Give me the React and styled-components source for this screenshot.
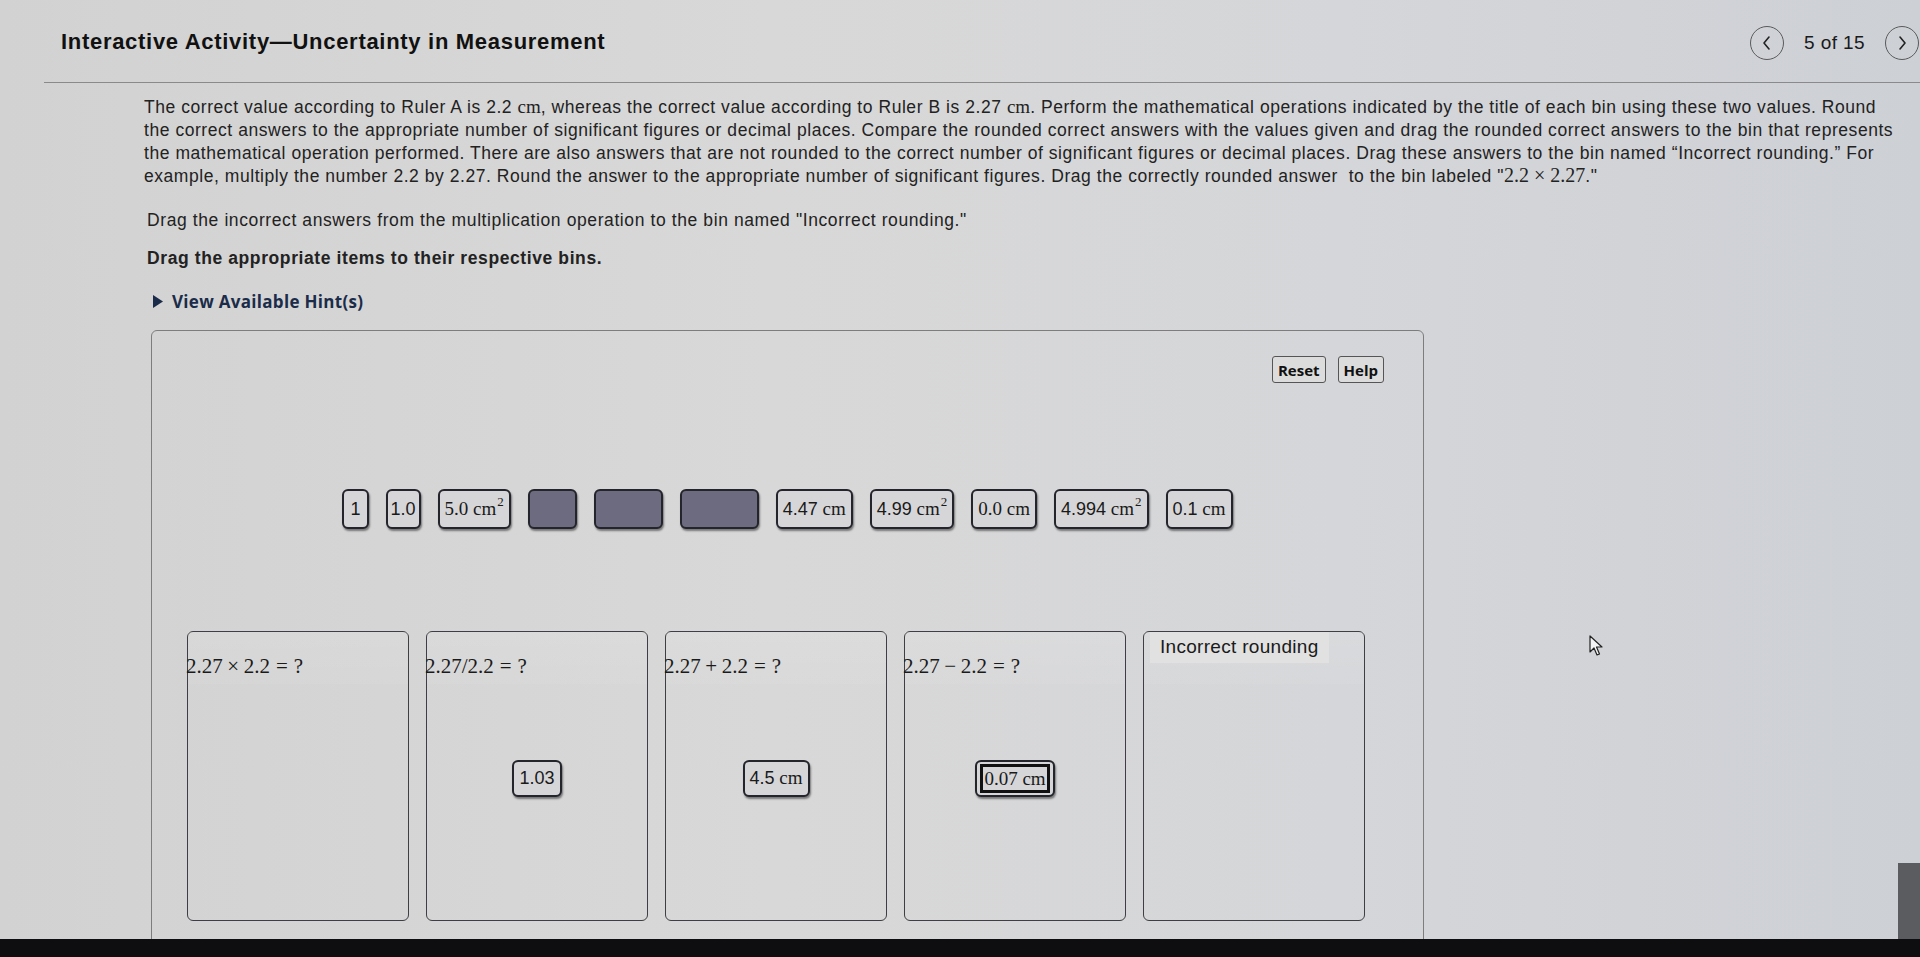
import React from 'react'
import styled, { createGlobalStyle } from 'styled-components'

const GlobalStyle = createGlobalStyle`
  html, body {
    margin: 0;
    padding: 0;
    height: 100%;
    overflow: hidden;
  }
  body {
    font-family: 'Liberation Sans', Arial, sans-serif;
    color: #1f1f1f;
  }
`

const SANS = "'Liberation Sans', Arial, sans-serif"
const SERIF = "'Liberation Serif', 'Times New Roman', serif"
const OPEN = "'Open Sans', 'Noto Sans', sans-serif"

const Page = styled.div`
  position: relative;
  height: 957px;
  display: flex;
  flex-direction: column;
  background: linear-gradient(90deg, #d2d2d2 0%, #d8d8d8 40%, #d5d6d9 70%, #cdd0d5 100%);
  overflow: hidden;
`

const Screen = styled.div`
  flex: 1;
  overflow: hidden;
`

const Bezel = styled.div`
  height: 18px;
  flex-shrink: 0;
  background: #0e0e10;
`

const Header = styled.header`
  height: 83px;
  margin-left: 44px;
  padding-left: 17px;
  display: flex;
  align-items: center;
  justify-content: space-between;
  border-bottom: 1px solid #8a8a8a;
  box-sizing: border-box;
`

const Title = styled.h1`
  margin: 2px 0 0;
  font-family: ${SANS};
  font-size: 22px;
  letter-spacing: 0.7px;
  font-weight: 700;
  color: #111;
`

const Nav = styled.nav`
  display: flex;
  align-items: center;
  gap: 20px;
  margin-top: 4px;
  margin-right: 1px;
`

const NavButton = styled.button`
  width: 34px;
  height: 34px;
  border-radius: 50%;
  border: 1px solid #5a5a5a;
  background: transparent;
  padding: 0;
  display: flex;
  align-items: center;
  justify-content: center;
  color: #222;
`

const NavCount = styled.span`
  font-family: ${SANS};
  font-size: 19px;
  letter-spacing: 0.4px;
  color: #1a1a1a;
`

const Content = styled.main`
  padding-left: 144px;
`

const Prompt = styled.p`
  margin: 13px 0 0;
  font-family: ${SANS};
  font-size: 17.5px;
  letter-spacing: 0.55px;
  line-height: 22.8px;
  color: #222;
`

const Line = styled.span`
  display: block;
  white-space: nowrap;
`

const Note = styled.p`
  margin: ${p => p.$top}px 0 0 3px;
  font-family: ${SANS};
  font-size: 17.5px;
  letter-spacing: 0.6px;
  line-height: 22px;
  font-weight: ${p => (p.$bold ? 700 : 400)};
  color: #222;
`

const M = styled.span`
  font-family: ${SERIF};
  font-size: ${p => (p.$big ? 20 : 19)}px;
  letter-spacing: 0;
  font-weight: ${p => (p.$bold ? 700 : 400)};
`

const Hint = styled.div`
  margin: 21px 0 0 9px;
  display: flex;
  align-items: center;
  gap: 9px;
  font-family: ${OPEN};
  font-weight: 700;
  font-size: 17px;
  letter-spacing: 0.3px;
  color: #1b2c4a;
`

const Panel = styled.section`
  margin: 17px 0 0 7px;
  width: 1273px;
  height: 700px;
  border: 1px solid #7d7d7d;
  border-radius: 6px;
  box-sizing: border-box;
  padding-top: 25px;
`

const Toolbar = styled.div`
  display: flex;
  justify-content: flex-end;
  gap: 12px;
  padding-right: 39px;
`

const ToolButton = styled.button`
  height: 27px;
  padding: 0 5px;
  border: 1px solid #555;
  border-radius: 3px;
  background: #dcdcdc;
  font-family: ${OPEN};
  font-weight: 700;
  font-size: 15px;
  color: #111;
`

const ChipRow = styled.div`
  margin-top: 106px;
  display: flex;
  justify-content: center;
  gap: 17px;
`

const Chip = styled.div`
  height: ${p => p.$h || 40}px;
  width: ${p => (p.$w ? `${p.$w}px` : 'auto')};
  min-width: 25px;
  padding: 0 ${p => (p.$w ? 0 : p.$pad ?? 5)}px;
  box-sizing: border-box;
  display: inline-flex;
  align-items: center;
  justify-content: center;
  white-space: nowrap;
  border: 2px solid #24242c;
  border-radius: 6px;
  background: ${p => (p.$dark ? '#6c6b7f' : '#d6d6d8')};
  box-shadow: 1px 2px 2px rgba(0, 0, 0, 0.45);
  font-family: ${p => (p.$serif ? SERIF : SANS)};
  font-size: ${p => (p.$serif ? 19 : 18)}px;
  color: #1a1a1a;
`

const Focus = styled.span`
  padding: 1px 1px 0;
  border: 3px solid #111;
  line-height: 22px;
  font-family: ${SERIF};
  font-size: 19px;
`

const Sup = styled.span`
  font-family: ${SERIF};
  font-size: 13px;
  position: relative;
  top: -7px;
  margin-left: 1px;
`

const Bins = styled.div`
  margin-top: 102px;
  padding-left: 35px;
  display: flex;
  gap: 17px;
`

const Bin = styled.div`
  width: 222px;
  height: 290px;
  box-sizing: border-box;
  border: 1.5px solid #3e3e44;
  border-radius: 6px;
  display: flex;
  flex-direction: column;
`

const BinHead = styled.div`
  height: 52px;
  padding-top: ${p => (p.$plain ? 0 : 22)}px;
  box-sizing: border-box;
  background: linear-gradient(180deg, rgba(255, 255, 255, 0.1), rgba(255, 255, 255, 0.04));
`

const MathLabel = styled.span`
  margin-left: -2px;
  font-family: ${SERIF};
  font-size: 21px;
  color: #1a1a1a;
  white-space: nowrap;
`

const Op = styled.span`
  margin: 0 ${p => (p.$rel ? 0.28 : 0.22)}em;
`

const TextLabel = styled.span`
  display: inline-block;
  margin-left: 6px;
  padding: 4px 10px 5px;
  background: #e1e1e2;
  font-family: ${SANS};
  font-size: 19px;
  letter-spacing: 0.3px;
  color: #1a1a1a;
`

const BinBody = styled.div`
  flex: 1;
  padding-bottom: 48px;
  display: flex;
  align-items: center;
  justify-content: center;
`

const Pointer = styled.svg`
  position: absolute;
  left: 1589px;
  top: 635px;
`

const ScrollThumb = styled.div`
  position: absolute;
  right: 0;
  top: 863px;
  width: 22px;
  height: 76px;
  background: #5b5c60;
`

const Chevron = ({ dir }) => (
  <svg width="12" height="16" viewBox="0 0 12 16" fill="none">
    <path
      d={dir === 'left' ? 'M8 2 L3 8 L8 14' : 'M4 2 L9 8 L4 14'}
      stroke="#222"
      strokeWidth="1.6"
      strokeLinecap="round"
      strokeLinejoin="round"
    />
  </svg>
)

const bank = [
  { num: '1', pad: 6 },
  { num: '1.0', pad: 3 },
  { num: '5.0', unit: 'cm', sq: true, serif: true },
  { dark: 49 },
  { dark: 69 },
  { dark: 79 },
  { num: '4.47', unit: 'cm' },
  { num: '4.99', unit: 'cm', sq: true },
  { num: '0.0', unit: 'cm', serif: true },
  { num: '4.994', unit: 'cm', sq: true },
  { num: '0.1', unit: 'cm' }
]

const Value = ({ num, unit, sq }) => (
  <>
    {num}
    {unit && <M>&nbsp;{unit}</M>}
    {sq && <Sup>2</Sup>}
  </>
)

const Equation = ({ a, op, b }) => (
  <MathLabel>
    {a}
    {op === '/' ? '/' : <Op>{op}</Op>}
    {b}
    <Op $rel>=</Op>?
  </MathLabel>
)

const bins = [
  { eq: ['2.27', '×', '2.2'] },
  { eq: ['2.27', '/', '2.2'], item: <Chip $h={37}>1.03</Chip> },
  { eq: ['2.27', '+', '2.2'], item: <Chip $h={37}><Value num="4.5" unit="cm" /></Chip> },
  { eq: ['2.27', '−', '2.2'], item: <Chip $h={37} $pad={3}><Focus>0.07 cm</Focus></Chip> },
  { text: 'Incorrect rounding' }
]

const App = () => {
  return (
    <Page>
      <GlobalStyle />
      <Screen>
        <Header>
          <Title>Interactive Activity—Uncertainty in Measurement</Title>
          <Nav>
            <NavButton aria-label="previous"><Chevron dir="left" /></NavButton>
            <NavCount>5 of 15</NavCount>
            <NavButton aria-label="next"><Chevron dir="right" /></NavButton>
          </Nav>
        </Header>
        <Content>
          <Prompt>
            <Line>
              The correct value according to Ruler A is 2.2 <M>cm</M>, whereas the correct value according to Ruler B is 2.27 <M>cm</M>. Perform the mathematical operations indicated by the title of each bin using these two values. Round
            </Line>
            <Line>
              the correct answers to the appropriate number of significant figures or decimal places. Compare the rounded correct answers with the values given and drag the rounded correct answers to the bin that represents
            </Line>
            <Line>
              the mathematical operation performed. There are also answers that are not rounded to the correct number of significant figures or decimal places. Drag these answers to the bin named “Incorrect rounding.” For
            </Line>
            <Line>
              example, multiply the number 2.2 by 2.27. Round the answer to the appropriate number of significant figures. Drag the correctly rounded answer&nbsp; to the bin labeled "<M $big>2.2 × 2.27</M>."
            </Line>
          </Prompt>
          <Note $top={21}>Drag the incorrect answers from the multiplication operation to the bin named "Incorrect rounding."</Note>
          <Note $top={16} $bold>Drag the appropriate items to their respective bins.</Note>
          <Hint>
            <svg width="10" height="13" viewBox="0 0 10 13">
              <path d="M0 0 L10 6.5 L0 13 Z" fill="#1b2c4a" />
            </svg>
            View Available Hint(s)
          </Hint>
          <Panel>
            <Toolbar>
              <ToolButton>Reset</ToolButton>
              <ToolButton>Help</ToolButton>
            </Toolbar>
            <ChipRow>
              {bank.map((c, i) =>
                c.dark
                  ? <Chip key={i} $dark $w={c.dark} />
                  : <Chip key={i} $serif={c.serif} $pad={c.pad}><Value {...c} /></Chip>
              )}
            </ChipRow>
            <Bins>
              {bins.map((b, i) => (
                <Bin key={i}>
                  <BinHead $plain={!!b.text}>
                    {b.eq && <Equation a={b.eq[0]} op={b.eq[1]} b={b.eq[2]} />}
                    {b.text && <TextLabel>{b.text}</TextLabel>}
                  </BinHead>
                  <BinBody>{b.item}</BinBody>
                </Bin>
              ))}
            </Bins>
          </Panel>
        </Content>
      </Screen>
      <Bezel />
      <ScrollThumb />
      <Pointer width="14" height="22" viewBox="0 0 14 22">
        <path d="M1 1 L1 17 L5 13 L8 20 L10.5 19 L7.5 12 L13 12 Z" fill="#f4f4f4" stroke="#222" strokeWidth="1.2" strokeLinejoin="round" />
      </Pointer>
    </Page>
  )
}

export default App
